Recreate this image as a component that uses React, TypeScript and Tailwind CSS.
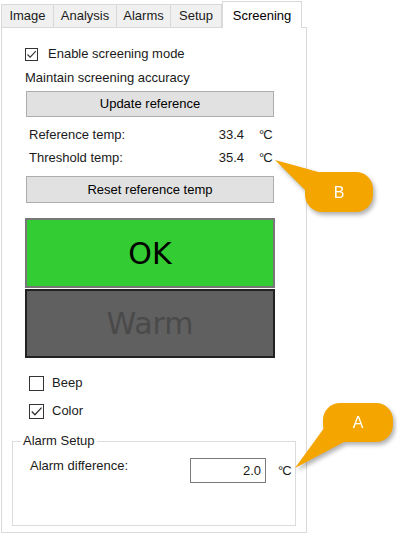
import type { ReactNode } from "react";

const FONT = "'Liberation Sans', Arial, sans-serif";

function CheckBox({ checked, size = 13 }: { checked?: boolean; size?: number }) {
  return (
    <span
      className="flex items-center justify-center border border-[#333333] bg-white shrink-0"
      style={{ width: size, height: size }}
    >
      {checked && (
        <svg width={size - 2} height={size - 2} viewBox="0 0 11 11">
          <path d="M1.5 5.5 L4.2 8.2 L9.8 2.2" fill="none" stroke="#333333" strokeWidth="1.1" />
        </svg>
      )}
    </span>
  );
}

function Tab({ label, width, active }: { label: string; width: number; active?: boolean }) {
  return (
    <div
      className={
        active
          ? "relative z-10 -mb-px h-[27px] flex items-start justify-center pt-[4px] bg-white border border-b-0 border-[#d9d9d9] text-[13px] text-black"
          : "h-[23px] flex items-center justify-center bg-[#f0f0f0] border border-l-0 border-b-0 border-[#d9d9d9] text-[13px] text-[#1a1a1a] first:border-l"
      }
      style={{ width }}
    >
      {label}
    </div>
  );
}

function Button({ children, h }: { children: ReactNode; h: number }) {
  return (
    <div
      className="ml-[24px] w-[248px] flex items-center justify-center bg-[#e1e1e1] border border-[#adadad] text-[13px] text-black"
      style={{ height: h }}
    >
      {children}
    </div>
  );
}

function Callouts() {
  return (
    <svg
      className="absolute inset-0 pointer-events-none drop-shadow-[2px_3px_2px_rgba(0,0,0,0.3)]"
      width="397"
      height="534"
      viewBox="0 0 397 534"
    >
      <g fill="#f5a500">
        <rect x="305" y="172" width="68" height="40" rx="17" />
        <path d="M275 160 L322 173 L308 193 Z" />
        <rect x="323" y="403" width="70" height="39" rx="17" />
        <path d="M295 468 L327 424 L346 441 Z" />
      </g>
      <g fill="#ffffff" fontFamily={FONT} fontSize="16" textAnchor="middle">
        <text x="339" y="198">B</text>
        <text x="358" y="428">A</text>
      </g>
    </svg>
  );
}

export default function App() {
  return (
    <div className="relative w-[397px] h-[534px] bg-white text-[#1a1a1a]" style={{ fontFamily: FONT }}>
      <div className="pl-px">
        <div className="flex items-end h-[27px]">
          <Tab label="Image" width={53} />
          <Tab label="Analysis" width={63} />
          <Tab label="Alarms" width={54} />
          <Tab label="Setup" width={51} />
          <Tab label="Screening" width={80} active />
        </div>

        <div className="w-[306px] h-[506px] border border-[#d9d9d9] bg-white flex flex-col">
          <div className="mt-[16px] h-[20px] ml-[23px] flex items-center gap-[10px] text-[13px]">
            <CheckBox checked />
            <span>Enable screening mode</span>
          </div>
          <div className="mt-[4px] h-[20px] ml-[23px] flex items-center text-[13px]">
            Maintain screening accuracy
          </div>
          <div className="mt-[3px]">
            <Button h={26}>Update reference</Button>
          </div>

          <div className="mt-[8px] h-[20px] ml-[27px] flex items-center text-[13px]">
            <span className="w-[150px]">Reference temp:</span>
            <span className="w-[65px] text-right">33.4</span>
            <span className="ml-[15px] tracking-[-1px]">°C</span>
          </div>
          <div className="mt-[3px] h-[20px] ml-[27px] flex items-center text-[13px]">
            <span className="w-[150px]">Threshold temp:</span>
            <span className="w-[65px] text-right">35.4</span>
            <span className="ml-[15px] tracking-[-1px]">°C</span>
          </div>
          <div className="mt-[8px]">
            <Button h={27}>Reset reference temp</Button>
          </div>

          <div
            className="mt-[15px] ml-[23px] w-[250px] h-[70px] flex items-center justify-center bg-[#33cc33] border-2 border-[#777777] text-[30px] text-black"
            style={{ fontFamily: "'DejaVu Sans', Verdana, sans-serif" }}
          >
            OK
          </div>
          <div
            className="mt-px ml-[23px] w-[250px] h-[69px] flex items-center justify-center bg-[#606060] border-2 border-[#222222] text-[30px] text-[#4a4a4a]"
            style={{ fontFamily: "'DejaVu Sans', Verdana, sans-serif" }}
          >
            Warm
          </div>

          <div className="mt-[15px] h-[20px] ml-[27px] flex items-center gap-[8px] text-[13px]">
            <CheckBox size={15} />
            <span>Beep</span>
          </div>
          <div className="mt-[8px] h-[20px] ml-[27px] flex items-center gap-[8px] text-[13px]">
            <CheckBox checked size={15} />
            <span>Color</span>
          </div>

          <fieldset className="mt-[12px] ml-[10px] w-[284px] h-[93px] border border-[#dcdcdc]">
            <legend className="ml-[8px] px-[2px] text-[13px] leading-[16px]">Alarm Setup</legend>
            <div className="mt-[9px] ml-[17px] flex items-start text-[13px]">
              <span className="w-[160px] leading-[16px]">Alarm difference:</span>
              <div className="w-[76px] h-[25px] border border-[#7a7a7a] bg-white flex items-center justify-end pr-[4px]">
                2.0
              </div>
              <span className="ml-[12px] mt-[3px] tracking-[-1px]">°C</span>
            </div>
          </fieldset>
        </div>
      </div>
      <Callouts />
    </div>
  );
}
